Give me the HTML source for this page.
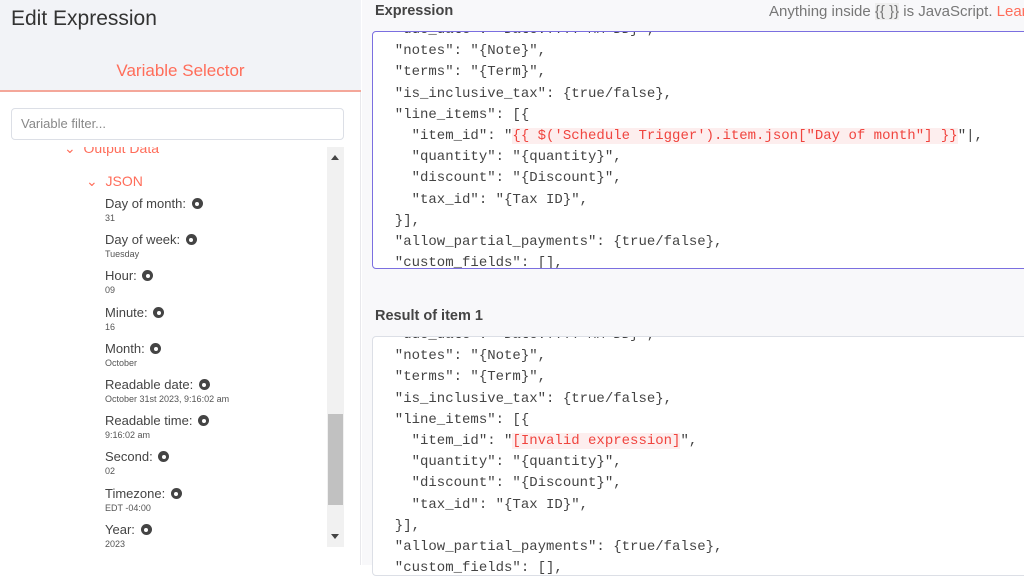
<!DOCTYPE html>
<html><head><style>
*{margin:0;padding:0;box-sizing:border-box}
body{width:1024px;height:565px;overflow:hidden;background:#fff;font-family:"Liberation Sans",sans-serif;position:relative}
.left{position:absolute;left:0;top:0;width:361px;height:565px;background:#fff;border-right:1px solid #e8e8ec}
.lh{position:absolute;left:0;top:0;width:361px;height:92px;background:#f2f3f7;border-bottom:2px solid #f4a79a}
.title{position:absolute;left:11px;top:7px;font-size:21px;color:#333}
.vs{position:absolute;left:0;width:361px;text-align:center;top:61px;font-size:17px;color:#ff6d5a}
.filter{position:absolute;left:11px;top:108px;width:333px;height:32px;border:1px solid #dcdfe6;border-radius:4px;font-size:13px;color:#888;padding:7px 9px}
.list{position:absolute;left:10px;top:147px;width:334px;height:400px;overflow:hidden}
.sb{position:absolute;right:0;top:0;width:17px;height:400px;background:#f1f1f1}
.thumb{position:absolute;left:1px;top:267px;width:15px;height:91px;background:#c1c1c1}
.item{position:absolute;left:95px;font-size:13px;color:#444;white-space:nowrap}
.item .v{font-size:9px;color:#555;margin-top:2px}
.dot{display:inline-block;width:11px;height:11px;border-radius:50%;background:#444;position:relative;top:1px;margin-left:2px}
.dot:after{content:"";position:absolute;left:3.5px;top:3.5px;width:4px;height:4px;border-radius:50%;background:#fff}
.red{color:#ff6d5a;position:absolute;font-size:14px}
.right{position:absolute;left:362px;top:0;width:662px;height:565px;background:#f8f8fa}
.h{position:absolute;font-weight:bold;font-size:14.5px;color:#444}
.hint{position:absolute;left:407px;top:3px;font-size:15px;color:#777;white-space:nowrap}
.box{position:absolute;left:10px;width:660px;background:#fff;overflow:hidden;border-radius:4px}
.code{position:absolute;left:5px;font-family:"Liberation Mono",monospace;font-size:14px;line-height:21.2px;color:#444;white-space:pre}
.hl{color:#f0443e;background:#fdeeee}
</style></head><body>
<div class="left">
 <div class="lh"></div>
 <div class="title">Edit Expression</div>
 <div class="vs">Variable Selector</div>
 <div class="filter">Variable filter...</div>
 <div class="list">
  <div class="red" style="left:54px;top:-7px">&#8964;&nbsp; Output Data</div>
  <div class="red" style="left:76px;top:26px">&#8964;&nbsp; JSON</div>
  <div class="item" style="top:49px">Day of month: <span class="dot"></span><div class="v">31</div></div>
  <div class="item" style="top:85px">Day of week: <span class="dot"></span><div class="v">Tuesday</div></div>
  <div class="item" style="top:121px">Hour: <span class="dot"></span><div class="v">09</div></div>
  <div class="item" style="top:158px">Minute: <span class="dot"></span><div class="v">16</div></div>
  <div class="item" style="top:194px">Month: <span class="dot"></span><div class="v">October</div></div>
  <div class="item" style="top:230px">Readable date: <span class="dot"></span><div class="v">October 31st 2023, 9:16:02 am</div></div>
  <div class="item" style="top:266px">Readable time: <span class="dot"></span><div class="v">9:16:02 am</div></div>
  <div class="item" style="top:302px">Second: <span class="dot"></span><div class="v">02</div></div>
  <div class="item" style="top:339px">Timezone: <span class="dot"></span><div class="v">EDT -04:00</div></div>
  <div class="item" style="top:375px">Year: <span class="dot"></span><div class="v">2023</div></div>
  <div class="sb"><div style="position:absolute;left:4px;top:8px;border:4px solid transparent;border-bottom:5px solid #444;border-top:0"></div><div class="thumb"></div><div style="position:absolute;left:4px;bottom:8px;border:4px solid transparent;border-top:5px solid #444;border-bottom:0"></div></div>
 </div>
</div>
<div class="right">
 <div class="h" style="left:13px;top:3px">Expression</div>
 <div class="hint">Anything inside <span style="background:#eee">{{ }}</span> is JavaScript. <span style="color:#ff6d5a">Learn more</span></div>
 <div class="box" style="top:31px;height:238px;border:1px solid #7b6fe0">
  <div class="code" style="top:-12px">  "due_date": "Date:YYYY-MM-DD}",
  "notes": "{Note}",
  "terms": "{Term}",
  "is_inclusive_tax": {true/false},
  "line_items": [{
    "item_id": "<span class="hl">{{ $('Schedule Trigger').item.json["Day of month"] }}</span>"|,
    "quantity": "{quantity}",
    "discount": "{Discount}",
    "tax_id": "{Tax ID}",
  }],
  "allow_partial_payments": {true/false},
  "custom_fields": [],</div>
 </div>
 <div class="h" style="left:13px;top:308px">Result of item 1</div>
 <div class="box" style="top:336px;height:240px;border:1px solid #dcdfe6">
  <div class="code" style="top:-12px">  "due_date": "Date:YYYY-MM-DD}",
  "notes": "{Note}",
  "terms": "{Term}",
  "is_inclusive_tax": {true/false},
  "line_items": [{
    "item_id": "<span class="hl">[Invalid expression]</span>",
    "quantity": "{quantity}",
    "discount": "{Discount}",
    "tax_id": "{Tax ID}",
  }],
  "allow_partial_payments": {true/false},
  "custom_fields": [],</div>
 </div>
</div>
</body></html>
